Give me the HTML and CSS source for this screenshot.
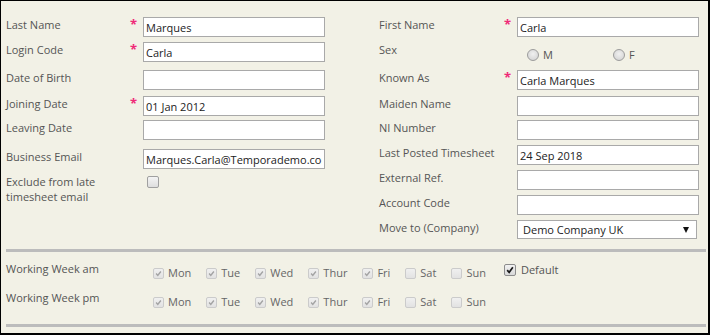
FILE: index.html
```html
<!DOCTYPE html>
<html>
<head>
<meta charset="utf-8">
<link rel="stylesheet" href="styles.css">
</head>
<body>
<div class="panel">
  <div class="top">
    <div class="col col-left">
      <div class="lbl">Last Name</div><div class="req">*</div><input class="txt" value="Marques" readonly>
      <div class="lbl">Login Code</div><div class="req">*</div><input class="txt" value="Carla" readonly>
      <div class="lbl">Date of Birth</div><div class="req"></div><input class="txt" value="" readonly>
      <div class="lbl">Joining Date</div><div class="req">*</div><input class="txt" value="01 Jan 2012" readonly>
      <div class="lbl">Leaving Date</div><div class="req"></div><input class="txt" value="" readonly>
      <div class="lbl">Business Email</div><div class="req"></div><input class="txt" value="Marques.Carla@Temporademo.com" readonly>
      <div class="lbl lbl-wrap">Exclude from late timesheet email</div><div class="req"></div><div class="field-cb"><span class="cb-plain"></span></div>
    </div>
    <div class="col col-right">
      <div class="lbl">First Name</div><div class="req">*</div><input class="txt" value="Carla" readonly>
      <div class="lbl">Sex</div><div class="req"></div>
      <div class="radios">
        <span class="radio-item"><span class="radio"></span>M</span>
        <span class="radio-item"><span class="radio"></span>F</span>
      </div>
      <div class="lbl">Known As</div><div class="req">*</div><input class="txt" value="Carla Marques" readonly>
      <div class="lbl">Maiden Name</div><div class="req"></div><input class="txt" value="" readonly>
      <div class="lbl">NI Number</div><div class="req"></div><input class="txt" value="" readonly>
      <div class="lbl">Last Posted Timesheet</div><div class="req"></div><input class="txt" value="24 Sep 2018" readonly>
      <div class="lbl">External Ref.</div><div class="req"></div><input class="txt" value="" readonly>
      <div class="lbl">Account Code</div><div class="req"></div><input class="txt" value="" readonly>
      <div class="lbl">Move to (Company)</div><div class="req"></div>
      <div class="select"><span>Demo Company UK</span><span class="arrow"></span></div>
    </div>
  </div>
  <div class="sep"></div>
  <div class="week">
    <div class="wrow">
      <div class="wlbl">Working Week am</div>
      <div class="days">
        <span class="day"><span class="cb cb-on"><svg viewBox="0 0 11 11"><path d="M2.6 5.6 L4.6 7.8 L8.4 3"/></svg></span>Mon</span>
        <span class="day"><span class="cb cb-on"><svg viewBox="0 0 11 11"><path d="M2.6 5.6 L4.6 7.8 L8.4 3"/></svg></span>Tue</span>
        <span class="day"><span class="cb cb-on"><svg viewBox="0 0 11 11"><path d="M2.6 5.6 L4.6 7.8 L8.4 3"/></svg></span>Wed</span>
        <span class="day"><span class="cb cb-on"><svg viewBox="0 0 11 11"><path d="M2.6 5.6 L4.6 7.8 L8.4 3"/></svg></span>Thur</span>
        <span class="day"><span class="cb cb-on"><svg viewBox="0 0 11 11"><path d="M2.6 5.6 L4.6 7.8 L8.4 3"/></svg></span>Fri</span>
        <span class="day"><span class="cb"></span>Sat</span>
        <span class="day"><span class="cb"></span>Sun</span>
      </div>
      <span class="default"><span class="cb-def"><svg viewBox="0 0 12 12"><path d="M2.6 6.2 L5 8.8 L9.4 2.8"/></svg></span>Default</span>
    </div>
    <div class="wrow">
      <div class="wlbl">Working Week pm</div>
      <div class="days">
        <span class="day"><span class="cb cb-on"><svg viewBox="0 0 11 11"><path d="M2.6 5.6 L4.6 7.8 L8.4 3"/></svg></span>Mon</span>
        <span class="day"><span class="cb cb-on"><svg viewBox="0 0 11 11"><path d="M2.6 5.6 L4.6 7.8 L8.4 3"/></svg></span>Tue</span>
        <span class="day"><span class="cb cb-on"><svg viewBox="0 0 11 11"><path d="M2.6 5.6 L4.6 7.8 L8.4 3"/></svg></span>Wed</span>
        <span class="day"><span class="cb cb-on"><svg viewBox="0 0 11 11"><path d="M2.6 5.6 L4.6 7.8 L8.4 3"/></svg></span>Thur</span>
        <span class="day"><span class="cb cb-on"><svg viewBox="0 0 11 11"><path d="M2.6 5.6 L4.6 7.8 L8.4 3"/></svg></span>Fri</span>
        <span class="day"><span class="cb"></span>Sat</span>
        <span class="day"><span class="cb"></span>Sun</span>
      </div>
    </div>
  </div>
  <div class="sep"></div>
</div>
</body>
</html>
```

FILE: styles.css
```css
* { box-sizing: border-box; }
html, body { margin: 0; padding: 0; background: #ffffff; }
body {
  font-family: "Open Sans", "DejaVu Sans", sans-serif;
  font-size: 11px;
  color: #555555;
}
.panel {
  width: 710px;
  height: 335px;
  background: #f2f1e6;
  border: 1px solid #000000;
  border-right-width: 2px;
  border-bottom-width: 2px;
}
.top {
  display: flex;
  align-items: flex-start;
  padding: 16px 0 9px 5px;
}
.col {
  display: grid;
  align-items: start;
}
.col-left {
  width: 373px;
  grid-template-columns: 124px 13px 182px;
  grid-template-rows: 25px 28px 26px 24px 29px 27px 30px;
}
.col-right {
  grid-template-columns: 125px 13px 182px;
  grid-template-rows: 25px 28px 26px 24px 25px 25px 25px 25px 20px;
}
.lbl {
  line-height: 16px;
  color: #555555;
  white-space: nowrap;
}
.lbl-wrap {
  white-space: normal;
  line-height: 15px;
  margin-top: -2px;
  width: 110px;
}
.req {
  color: #ef2a78;
  font-size: 13px;
  font-weight: bold;
  line-height: 16px;
  margin-top: -1px;
}
.txt {
  display: block;
  width: 182px;
  height: 20px;
  margin: 0;
  border: 1px solid #a9a9a9;
  border-radius: 0;
  background: #ffffff;
  padding: 0 2px;
  font-family: "Open Sans", "DejaVu Sans", sans-serif;
  font-size: 11px;
  color: #222222;
  outline: none;
}
.field-cb { padding-left: 4px; }
.cb-plain {
  display: block;
  width: 12px;
  height: 12px;
  border: 1px solid #a0a0a0;
  border-radius: 2px;
  background: linear-gradient(#f4f4f4, #dedede);
}
.radios {
  display: flex;
  padding: 7px 0 0 10px;
  line-height: 12px;
}
.radio-item {
  display: flex;
  align-items: center;
  width: 92px;
  color: #555555;
}
.radio {
  width: 12px;
  height: 12px;
  border: 1px solid #9c9c9c;
  border-radius: 50%;
  background: radial-gradient(circle at 50% 40%, #f0f0f0, #cfcfcf);
  margin-right: 4px;
}
.select {
  display: flex;
  align-items: center;
  justify-content: space-between;
  width: 180px;
  height: 19px;
  border: 1px solid #a9a9a9;
  background: #ffffff;
  padding: 0 7px 0 5px;
  color: #222222;
}
.arrow {
  width: 0;
  height: 0;
  border-left: 3px solid transparent;
  border-right: 3px solid transparent;
  border-top: 6px solid #111111;
}
.sep {
  height: 3px;
  background: #bcbcbc;
  margin: 0 2px 0 5px;
}
.week {
  display: flex;
  flex-direction: column;
  gap: 9px;
  padding: 9px 0 14px 5px;
}
.wrow {
  display: flex;
  align-items: flex-start;
  height: 20px;
}
.wlbl {
  width: 147px;
  line-height: 16px;
}
.days {
  display: flex;
  gap: 15px;
  margin-top: 4px;
  line-height: 16px;
  color: #666666;
}
.day {
  display: flex;
  align-items: center;
}
.cb {
  display: block;
  width: 11px;
  height: 11px;
  border: 1px solid #cbcbcb;
  border-radius: 2px;
  background: linear-gradient(#f0f0f0, #e2e2e2);
  margin-right: 4px;
  position: relative;
}
.cb svg, .cb-def svg {
  display: block;
  width: 100%;
  height: 100%;
}
.cb svg path {
  fill: none;
  stroke: #a3a3a3;
  stroke-width: 1.7;
}
.default {
  display: flex;
  align-items: center;
  margin-left: 18px;
  margin-top: 1px;
  line-height: 16px;
  color: #555555;
}
.cb-def {
  display: block;
  width: 12px;
  height: 12px;
  border: 1px solid #8c8c8c;
  border-radius: 2px;
  background: linear-gradient(#f2f2f2, #d8d8d8);
  margin-right: 5px;
}
.cb-def svg path {
  fill: none;
  stroke: #1a1a1a;
  stroke-width: 2;
}
```
